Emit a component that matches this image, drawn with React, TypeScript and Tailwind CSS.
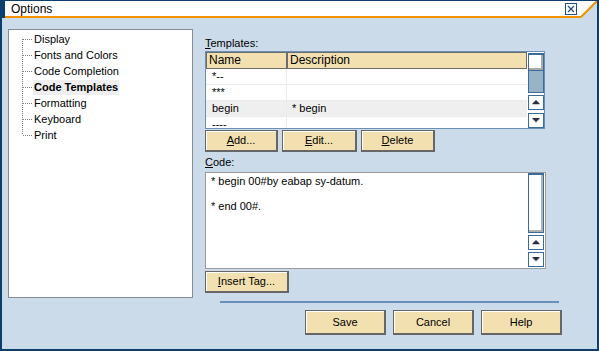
import React from "react";

const templates = [
  { name: "*--", desc: "" },
  { name: "***", desc: "" },
  { name: "begin", desc: "* begin" },
  { name: "----", desc: "" },
];

const treeItems = [
  "Display",
  "Fonts and Colors",
  "Code Completion",
  "Code Templates",
  "Formatting",
  "Keyboard",
  "Print",
];

function Arrow({ up }: { up?: boolean }) {
  return (
    <div className="h-[15px] w-[16px] border border-[#3a6b9c] bg-white flex items-center justify-center">
      <svg width="10" height="7" viewBox="0 0 10 7">
        {up ? (
          <>
            <polygon points="1,6 9,6 5,2" fill="#c8ccd6" />
            <polygon points="1,5 9,5 5,1" fill="#2a2d40" />
          </>
        ) : (
          <>
            <polygon points="1,2 9,2 5,6" fill="#c8ccd6" />
            <polygon points="1,1 9,1 5,5" fill="#2a2d40" />
          </>
        )}
      </svg>
    </div>
  );
}

function Btn({ children, className = "" }: { children: React.ReactNode; className?: string }) {
  return (
    <button
      className={`bg-[#f3e0b0] border border-r-2 border-b-2 border-[#666666] shadow-[inset_1px_1px_0_#ffffff] text-[11px] text-black flex items-center justify-center ${className}`}
    >
      {children}
    </button>
  );
}

export default function App() {
  return (
    <div className="w-[599px] h-[351px] bg-[#0d3f6e] pt-px px-[2px] pb-[2px] flex flex-col font-['Liberation_Sans',Arial,sans-serif] text-black">
      <div className="h-[17px] flex shrink-0">
        <div className="w-[3px]" />
        <div className="flex-1 bg-white border-b-2 border-[#f39200] flex items-center justify-between pl-[6px] pr-[4px]">
          <span className="text-[12px] leading-[14px] pt-px">Options</span>
          <div className="w-[12px] h-[12px] border border-[#1c4f86] flex items-center justify-center">
            <svg width="8" height="8" viewBox="0 0 8 8">
              <path d="M1 1 L7 7 M7 1 L1 7" stroke="#1c4f86" strokeWidth="1.2" />
            </svg>
          </div>
        </div>
        <svg width="16" height="17" viewBox="0 0 16 17" className="shrink-0">
          <rect width="16" height="17" fill="#cbdbe9" />
          <polygon points="0,0 16,0 16,-1 0,15" fill="#ffffff" />
          <line x1="0" y1="16" x2="16" y2="0" stroke="#f39200" strokeWidth="2" />
        </svg>
      </div>

      <div className="flex-1 bg-[#cbdbe9] flex flex-col pt-[11px] pl-[6px]">
        <div className="flex gap-[12px]">
          <div className="w-[185px] h-[269px] bg-white border border-[#878c94] pt-[1px] pl-[13px]">
            {treeItems.map((item, i) => (
              <div key={item} className="h-[16px] flex items-center">
                <svg width="11" height="16" viewBox="0 0 11 16" className="shrink-0">
                  <line
                    x1="0.5"
                    y1={i === 0 ? 8 : 0}
                    x2="0.5"
                    y2={i === treeItems.length - 1 ? 8 : 16}
                    stroke="#808080"
                    strokeDasharray="1 1"
                  />
                  <line x1="1" y1="8.5" x2="10" y2="8.5" stroke="#808080" strokeDasharray="1 1" />
                </svg>
                <span
                  className={`text-[11px] leading-[15px] px-[1px] ${
                    item === "Code Templates" ? "font-bold bg-[#eeeeee]" : ""
                  }`}
                >
                  {item}
                </span>
              </div>
            ))}
          </div>

          <div className="w-[341px] flex flex-col pt-[7px]">
            <div className="text-[11px] leading-[14px] h-[14px] mb-[1px]">
              <u>T</u>emplates:
            </div>
            <div className="w-[340px] h-[78px] border border-[#6c8fb4] bg-white flex">
              <div className="w-[321px] flex flex-col overflow-hidden">
                <div className="h-[17px] flex shrink-0 text-[12px]">
                  <div className="w-[81px] bg-[#f3e0b0] border border-[#6b6b6b] pl-[2px] leading-[15px]">
                    Name
                  </div>
                  <div className="w-[240px] bg-[#f3e0b0] border border-[#6b6b6b] pl-[2px] leading-[15px]">
                    Description
                  </div>
                </div>
                {templates.map((t, i) => (
                  <div
                    key={t.name}
                    className={`h-[16px] shrink-0 flex text-[11px] border-b border-[#ebebeb] ${
                      i === 2 ? "bg-[#efefef]" : ""
                    }`}
                  >
                    <div className="w-[81px] pl-[6px] leading-[15px] border-r border-[#ebebeb]">{t.name}</div>
                    <div className="flex-1 pl-[5px] leading-[15px]">{t.desc}</div>
                  </div>
                ))}
              </div>
              <div className="flex-1 flex justify-center">
                <div className="w-[16px] flex flex-col pt-[1px]">
                  <div className="h-[40px] w-[16px] border border-t-2 border-[#3a6b9c] flex flex-col">
                    <div className="h-[15px] bg-white shadow-[inset_-2px_-2px_0_#a9a9a9]" />
                    <div className="flex-1 bg-[#98b3c6] border-t border-[#3a6b9c]" />
                  </div>
                  <div className="mt-[2px]">
                    <Arrow up />
                  </div>
                  <div className="mt-[3px]">
                    <Arrow />
                  </div>
                </div>
              </div>
            </div>

            <div className="flex gap-[4px] mt-[1px]">
              <Btn className="w-[73px] h-[22px]">
                <span>
                  <u>A</u>dd...
                </span>
              </Btn>
              <Btn className="w-[75px] h-[22px]">
                <span>
                  <u>E</u>dit...
                </span>
              </Btn>
              <Btn className="w-[74px] h-[22px]">
                <span>
                  <u>D</u>elete
                </span>
              </Btn>
            </div>

            <div className="text-[11px] leading-[14px] h-[14px] mt-[3px] mb-[3px]">
              <u>C</u>ode:
            </div>
            <div className="w-[341px] h-[97px] border border-[#9a9a9a] bg-white flex">
              <div className="flex-1 pl-[5px] pt-[2px] text-[11px] leading-[12.5px]">
                <div>* begin 00#by eabap sy-datum.</div>
                <div>&nbsp;</div>
                <div>* end 00#.</div>
              </div>
              <div className="w-[18px] flex flex-col pl-[1px]">
                <div className="h-[60px] w-[16px] border border-t-2 border-[#3a6b9c] flex flex-col">
                  <div className="flex-1 bg-white shadow-[inset_-2px_-2px_0_#b0b0b0]" />
                </div>
                <div className="mt-[2px]">
                  <Arrow up />
                </div>
                <div className="mt-[2px]">
                  <Arrow />
                </div>
              </div>
            </div>

            <div className="mt-[2px]">
              <Btn className="w-[84px] h-[22px]">
                <span>
                  <u>I</u>nsert Tag...
                </span>
              </Btn>
            </div>
          </div>
        </div>

        <div className="ml-[212px] mt-[3px] w-[339px] h-[2px] bg-[#6a8fba]" />

        <div className="flex justify-end gap-[7px] mt-[7px] pr-[35px]">
          <Btn className="w-[81px] h-[25px]">Save</Btn>
          <Btn className="w-[81px] h-[25px]">Cancel</Btn>
          <Btn className="w-[81px] h-[25px]">Help</Btn>
        </div>
      </div>
    </div>
  );
}
